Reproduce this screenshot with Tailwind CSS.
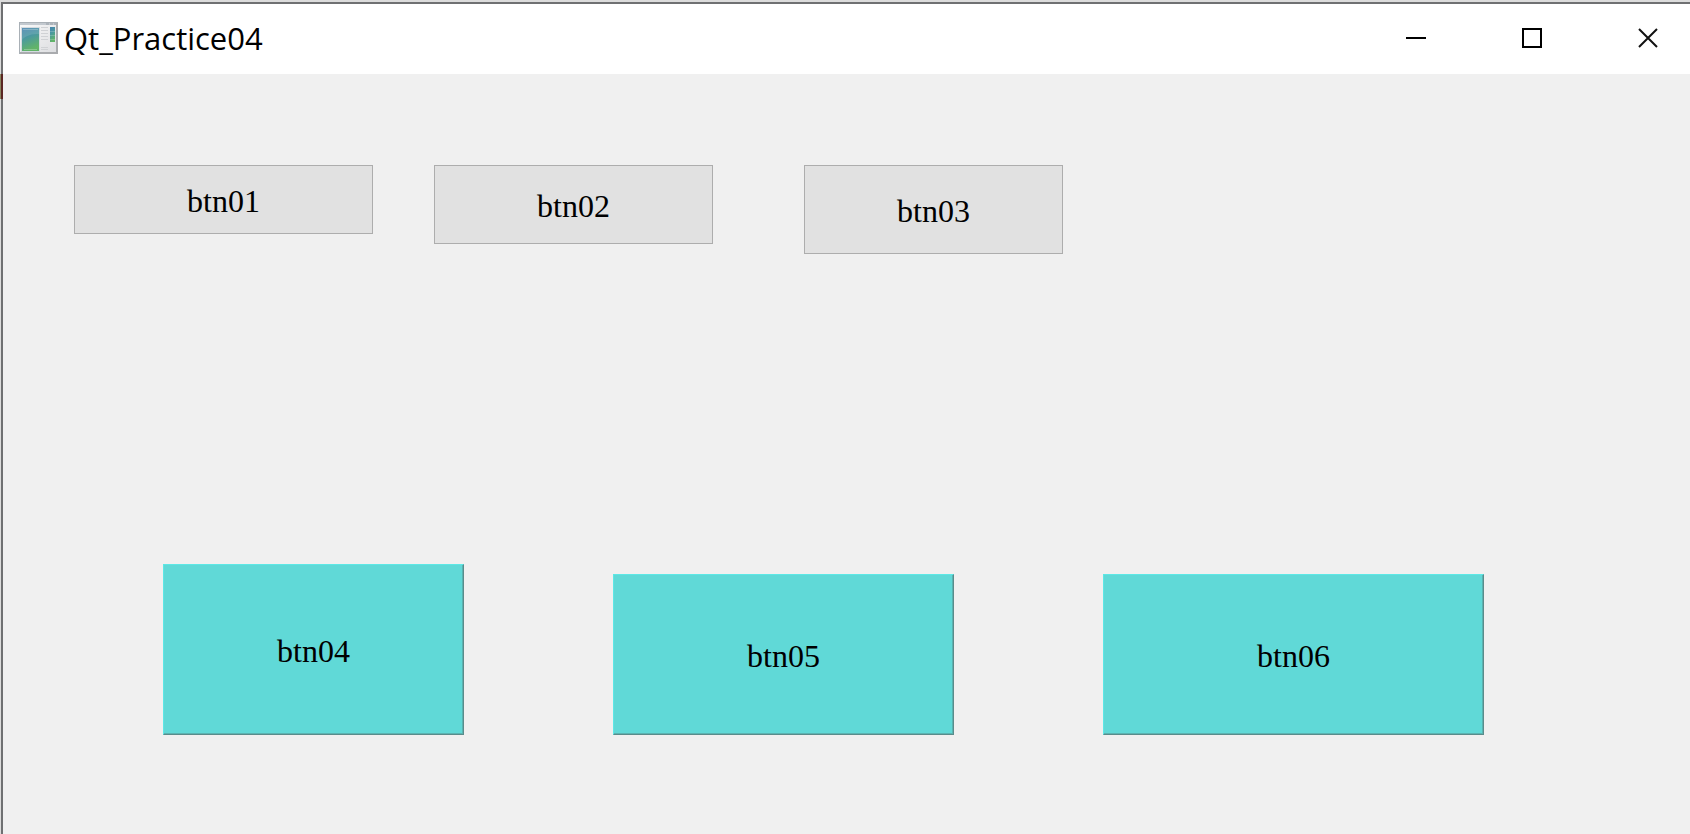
<!DOCTYPE html>
<html lang="en">
<head>
    <meta charset="UTF-8">
    <meta name="viewport" content="width=device-width, initial-scale=1.0">
    <title>Qt_Practice04</title>
    <script src="https://cdn.jsdelivr.net/npm/@tailwindcss/browser@4"></script>
</head>
<body class="bg-[#dcdcdc]">
    <div class="relative min-h-screen flex flex-col overflow-hidden pt-[2px] pl-px">
        <!-- Edge of the window behind -->
        <div class="absolute left-0 top-[74px] w-[3px] h-[25px] bg-[#5a2623] border-l border-[#8a8560]"></div>

        <div class="flex-1 flex flex-col border-t-2 border-l-2 border-[#6f7072] bg-[#f0f0f0]">
            <!-- Title bar -->
            <header class="flex items-stretch justify-between h-[70px] pb-[2px] bg-white">
                <div class="flex items-center gap-[5px] pl-4">
                    <svg class="w-10 h-[34px]" viewBox="0 0 40 34" aria-hidden="true">
                        <defs>
                            <linearGradient id="pane" x1="0" y1="0" x2="0.3" y2="1">
                                <stop offset="0" stop-color="#4682ae"/>
                                <stop offset="0.45" stop-color="#4a98a0"/>
                                <stop offset="1" stop-color="#62b468"/>
                            </linearGradient>
                            <linearGradient id="frame" x1="0" y1="0" x2="1" y2="1">
                                <stop offset="0" stop-color="#fafafa"/>
                                <stop offset="1" stop-color="#dcdde0"/>
                            </linearGradient>
                        </defs>
                        <rect x="0.5" y="1.5" width="38" height="31" fill="url(#frame)" stroke="#a9b0b6"/>
                        <path d="M1 2h37v2H1z" fill="#c3c9cf"/>
                        <path d="M27 3h3M31 3h3M35 3h3" stroke="#969da5"/>
                        <path d="M38 2v31M1 32h38" stroke="#a9abae" stroke-width="2"/>
                        <rect x="2" y="6" width="19" height="25" fill="#d3dbe0"/>
                        <rect x="3" y="7" width="17" height="23" fill="url(#pane)"/>
                        <path d="M3 19c4-5 10-6 17-6V7H3z" fill="#fff" fill-opacity="0.12"/>
                        <path d="M5 28.500h13M4 8.500h15" stroke="#fff" stroke-opacity="0.25"/>
                        <path d="M22 6.500h7M22 9.500h7M22 12.500h7M22 15.500h7M22 18.500h7M22 26.500h7M22 28.500h7" stroke="#d0d2d5"/>
                        <rect x="31" y="6" width="5" height="15" fill="url(#pane)"/>
                        <path d="M31 10.500h5M31 14.500h5M31 18.500h5" stroke="#fff" stroke-opacity="0.2"/>
                    </svg>
                    <h1 class="font-['Open_Sans',sans-serif] text-[31px] leading-10 text-black">Qt_Practice04</h1>
                </div>
                <div class="flex -mr-4">
                    <button type="button" aria-label="Minimize" class="flex items-center justify-center w-[116px] hover:bg-gray-200">
                        <svg class="w-5 h-5" viewBox="0 0 20 20" fill="none" stroke="#000" stroke-width="2"><path d="M0 10h20"/></svg>
                    </button>
                    <button type="button" aria-label="Maximize" class="flex items-center justify-center w-[116px] hover:bg-gray-200">
                        <svg class="w-5 h-5" viewBox="0 0 20 20" fill="none" stroke="#000" stroke-width="2"><path d="M1 1h18v18H1z"/></svg>
                    </button>
                    <button type="button" aria-label="Close" class="flex items-center justify-center w-[116px] hover:bg-red-500">
                        <svg class="w-5 h-5" viewBox="0 0 20 20" fill="none" stroke="#111" stroke-width="2"><path d="M1 1l18 18M19 1L1 19"/></svg>
                    </button>
                </div>
            </header>

            <!-- Buttons -->
            <main class="flex-1 flex flex-col gap-[310px] pt-[91px] font-['Liberation_Serif',serif] text-[32px] leading-10 text-black">
                <div class="flex items-start pl-[71px]">
                    <button type="button" class="w-[299px] h-[69px] pt-[2px] bg-[#e1e1e1] border border-[#adadad]">btn01</button>
                    <button type="button" class="w-[279px] h-[79px] pt-[2px] ml-[61px] bg-[#e1e1e1] border border-[#adadad]">btn02</button>
                    <button type="button" class="w-[259px] h-[89px] pt-[2px] ml-[91px] bg-[#e1e1e1] border border-[#adadad]">btn03</button>
                </div>
                <div class="flex items-end gap-[149px] pl-[160px]">
                    <button type="button" class="w-[301px] h-[171px] pt-[2px] bg-[#60d9d7] border border-t-[#5de8e6] border-l-[#5de8e6] border-r-[#5a8c8b] border-b-[#5a8c8b] shadow-[inset_-1px_-1px_0_#5bb3b1]">btn04</button>
                    <button type="button" class="w-[341px] h-[161px] pt-[2px] bg-[#60d9d7] border border-t-[#5de8e6] border-l-[#5de8e6] border-r-[#5a8c8b] border-b-[#5a8c8b] shadow-[inset_-1px_-1px_0_#5bb3b1]">btn05</button>
                    <button type="button" class="w-[381px] h-[161px] pt-[2px] bg-[#60d9d7] border border-t-[#5de8e6] border-l-[#5de8e6] border-r-[#5a8c8b] border-b-[#5a8c8b] shadow-[inset_-1px_-1px_0_#5bb3b1]">btn06</button>
                </div>
            </main>
        </div>
    </div>
</body>
</html>
